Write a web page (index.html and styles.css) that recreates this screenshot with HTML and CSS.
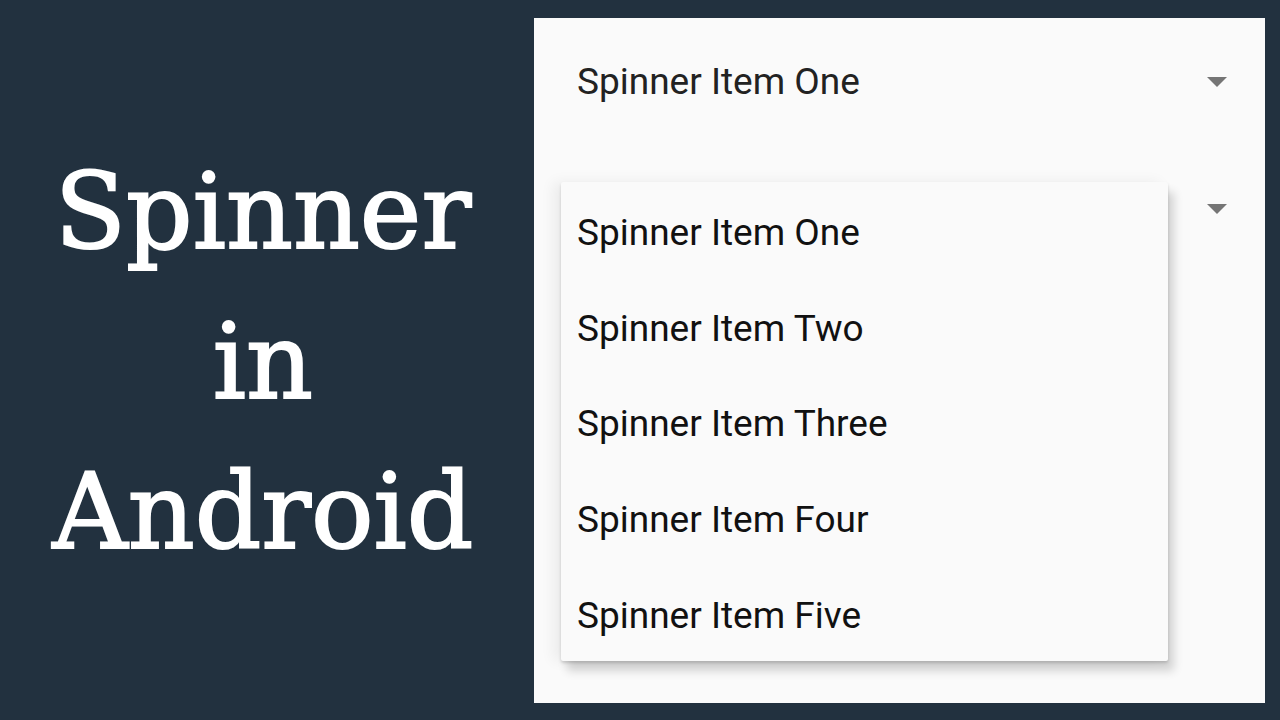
FILE: index.html
```html
<!DOCTYPE html>
<html lang="en">
<head>
    <meta charset="UTF-8">
    <meta name="viewport" content="width=device-width, initial-scale=1.0">
    <title>Spinner in Android</title>
    <link rel="stylesheet" href="styles.css">
</head>
<body>
    <div class="page">
        <div class="title-col">
            <h1 class="title">Spinner<br>in<br>Android</h1>
        </div>
        <div class="phone">
            <div class="spinner">
                <span class="spinner-text">Spinner Item One</span>
                <svg class="arrow" width="20" height="10" viewBox="0 0 20 10"><path d="M0 0 L20 0 L10 10 Z" fill="#757575"/></svg>
            </div>
            <div class="spinner">
                <span class="spinner-text"></span>
                <svg class="arrow" width="20" height="10" viewBox="0 0 20 10"><path d="M0 0 L20 0 L10 10 Z" fill="#757575"/></svg>
            </div>

            <!-- popup of the second spinner -->
            <ul class="dropdown">
                <li>Spinner Item One</li>
                <li>Spinner Item Two</li>
                <li>Spinner Item Three</li>
                <li>Spinner Item Four</li>
                <li>Spinner Item Five</li>
            </ul>
        </div>
    </div>
</body>
</html>
```

FILE: styles.css
```css
body {
    margin: 0;
    background-color: #22313f;
    font-family: Roboto, "Noto Sans", sans-serif;
}
.page {
    display: flex;
    height: 720px;
}
.title-col {
    width: 526px;
    display: flex;
    align-items: flex-start;
    justify-content: center;
}
.title {
    margin: 137px 0 0 0;
    font-family: "DejaVu Serif", "Liberation Serif", serif;
    font-weight: normal;
    font-size: 104px;
    line-height: 150px;
    color: #fff;
    -webkit-text-stroke: 2px #fff; /* slab look, heavier strokes */
    text-align: center;
}
.phone {
    position: relative;
    margin: 18px 0 0 8px;
    width: 731px;
    height: 685px;
    background-color: #fafafa;
}
.spinner {
    height: 127px;
    display: flex;
    align-items: center;
    justify-content: space-between;
    padding: 0 38px 0 43px;
}
.spinner-text {
    font-size: 37px;
    color: #222;
}
.dropdown {
    position: absolute;
    left: 27px;
    top: 164px;
    width: 607px;
    margin: 0;
    padding: 0;
    list-style-type: none;
    background-color: #fafafa;
    border-radius: 2px;
    box-shadow: 0 2px 3px rgba(0, 0, 0, 0.15), 6px 10px 10px rgba(0, 0, 0, 0.16), -8px 0 14px rgba(0, 0, 0, 0.06);
}
.dropdown li {
    box-sizing: border-box;
    height: 95.8px;
    display: flex;
    align-items: center;
    padding: 5px 0 0 16px;
    font-size: 37px;
    color: #111;
}
```
